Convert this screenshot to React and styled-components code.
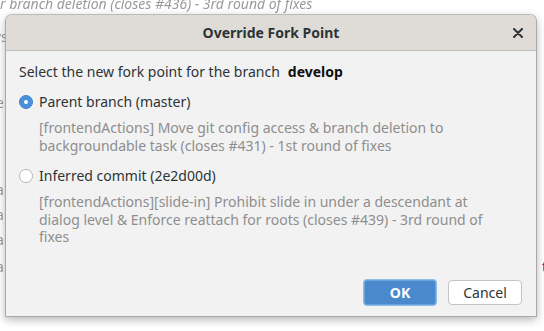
import React from "react";
import styled, { createGlobalStyle } from "styled-components";

const Global = createGlobalStyle`
  html, body { margin: 0; padding: 0; background: #ffffff; }
  body { font-family: "Noto Sans", "Open Sans", sans-serif; }
`;

const Screen = styled.div`
  position: relative;
  width: 544px;
  height: 331px;
  overflow: hidden;
  background: #ffffff;
`;

const Backdrop = styled.div`
  display: flex;
  flex-direction: column;
  color: #9a9a9a;
  font-size: 14px;
  filter: blur(0.5px);
`;

const BackLine = styled.div`
  display: flex;
  justify-content: space-between;
  height: 18px;
  line-height: 18px;
  white-space: nowrap;
  margin-top: ${(p) => p.gap || 0}px;
  margin-left: ${(p) => p.indent || 0}px;
  font-style: ${(p) => (p.italic ? "italic" : "normal")};
`;

const RedTail = styled.span`
  color: #c8103a;
  margin-right: -3px;
`;

const Dialog = styled.div`
  position: absolute;
  left: 5px;
  top: 14px;
  width: 532px;
  height: 303px;
  display: flex;
  flex-direction: column;
  background: #f2f2f2;
  border: 1px solid #a9a9a9;
  border-top-color: #bdbab6;
  border-radius: 7px 7px 0 0;
  box-sizing: border-box;
  box-shadow: 0 3px 9px rgba(0, 0, 0, 0.28);
  overflow: hidden;
`;

const TitleBar = styled.div`
  position: relative;
  height: 36px;
  flex: none;
  display: flex;
  align-items: center;
  justify-content: center;
  background: #dfdcd8;
  border-bottom: 1px solid #c0bcb8;
  box-sizing: border-box;
  font-weight: bold;
  font-size: 14px;
  color: #2e3436;
`;

const CloseBtn = styled.div`
  position: absolute;
  right: 10px;
  top: 10px;
  width: 16px;
  height: 16px;
  display: flex;
  align-items: center;
  justify-content: center;
`;

const Body = styled.div`
  flex: 1;
  display: flex;
  flex-direction: column;
  padding: 11px 14px 10px 13px;
`;

const Prompt = styled.div`
  font-size: 14px;
  line-height: 20px;
  color: #2e3436;
  display: flex;
  gap: 8px;
  b { color: #101010; }
`;

const Options = styled.div`
  display: flex;
  flex-direction: column;
  gap: 12px;
  margin-top: 10px;
`;

const Option = styled.div`
  display: flex;
  flex-direction: column;
`;

const RadioRow = styled.div`
  display: flex;
  align-items: center;
  gap: 6px;
  font-size: 14px;
  line-height: 20px;
  color: #2e3436;
`;

const Radio = styled.span`
  width: 14px;
  height: 14px;
  border-radius: 50%;
  box-sizing: border-box;
  display: flex;
  align-items: center;
  justify-content: center;
  background: ${(p) => (p.checked ? "#4a90d9" : "#ffffff")};
  border: 1px solid ${(p) => (p.checked ? "#3d83cf" : "#b6b6b3")};
  &::after {
    content: "";
    width: 4px;
    height: 4px;
    border-radius: 50%;
    background: ${(p) => (p.checked ? "#ffffff" : "transparent")};
  }
`;

const Desc = styled.div`
  margin-left: 20px;
  margin-top: 7px;
  font-size: 14px;
  line-height: 17.5px;
  color: #8e8e8e;
  max-width: 470px;
`;

const Footer = styled.div`
  margin-top: auto;
  display: flex;
  justify-content: flex-end;
  gap: 11px;
`;

const Button = styled.button`
  width: 74px;
  height: ${(p) => (p.primary ? 27 : 25)}px;
  margin-top: ${(p) => (p.primary ? 0 : 1)}px;
  box-sizing: border-box;
  border-radius: 4px;
  font-family: inherit;
  font-size: 14px;
  padding: 0;
  cursor: pointer;
  ${(p) =>
    p.primary
      ? `
    background: #4a89cc;
    color: #ffffff;
    font-weight: bold;
    border: 1px solid #8dbdec;
    box-shadow: inset 0 0 0 1px #6aa3de;
    outline: none;
  `
      : `
    background: #ffffff;
    color: #2e3436;
    border: 1px solid #c4c4c4;
  `}
`;

export default function App() {
  return (
    <>
      <Global />
      <Screen>
        <Backdrop>
          <BackLine gap={-5} italic>r branch deletion (closes #436) - 3rd round of fixes</BackLine>
          <BackLine gap={15} indent={-6}>vs</BackLine>
          <BackLine gap={48} indent={-4}>e</BackLine>
          <BackLine gap={69} indent={-4}>a</BackLine>
          <BackLine gap={7} indent={-4}>a</BackLine>
          <BackLine gap={7} indent={-4}>a</BackLine>
          <BackLine gap={9} indent={-4}>
            <span>a</span>
            <RedTail>t</RedTail>
          </BackLine>
        </Backdrop>
        <Dialog>
          <TitleBar>
            Override Fork Point
            <CloseBtn>
              <svg width="10" height="10" viewBox="0 0 10 10">
                <path d="M1 1 L9 9 M9 1 L1 9" stroke="#2e3436" strokeWidth="2" strokeLinecap="round" />
              </svg>
            </CloseBtn>
          </TitleBar>
          <Body>
            <Prompt>
              <span>Select the new fork point for the branch</span>
              <b>develop</b>
            </Prompt>
            <Options>
              <Option>
                <RadioRow>
                  <Radio checked />
                  <span>Parent branch (master)</span>
                </RadioRow>
                <Desc>
                  [frontendActions] Move git config access &amp; branch deletion to backgroundable task (closes #431) - 1st round of fixes
                </Desc>
              </Option>
              <Option>
                <RadioRow>
                  <Radio />
                  <span>Inferred commit (2e2d00d)</span>
                </RadioRow>
                <Desc>
                  [frontendActions][slide-in] Prohibit slide in under a descendant at dialog level &amp; Enforce reattach for roots (closes #439) - 3rd round of fixes
                </Desc>
              </Option>
            </Options>
            <Footer>
              <Button primary>OK</Button>
              <Button>Cancel</Button>
            </Footer>
          </Body>
        </Dialog>
      </Screen>
    </>
  );
}
